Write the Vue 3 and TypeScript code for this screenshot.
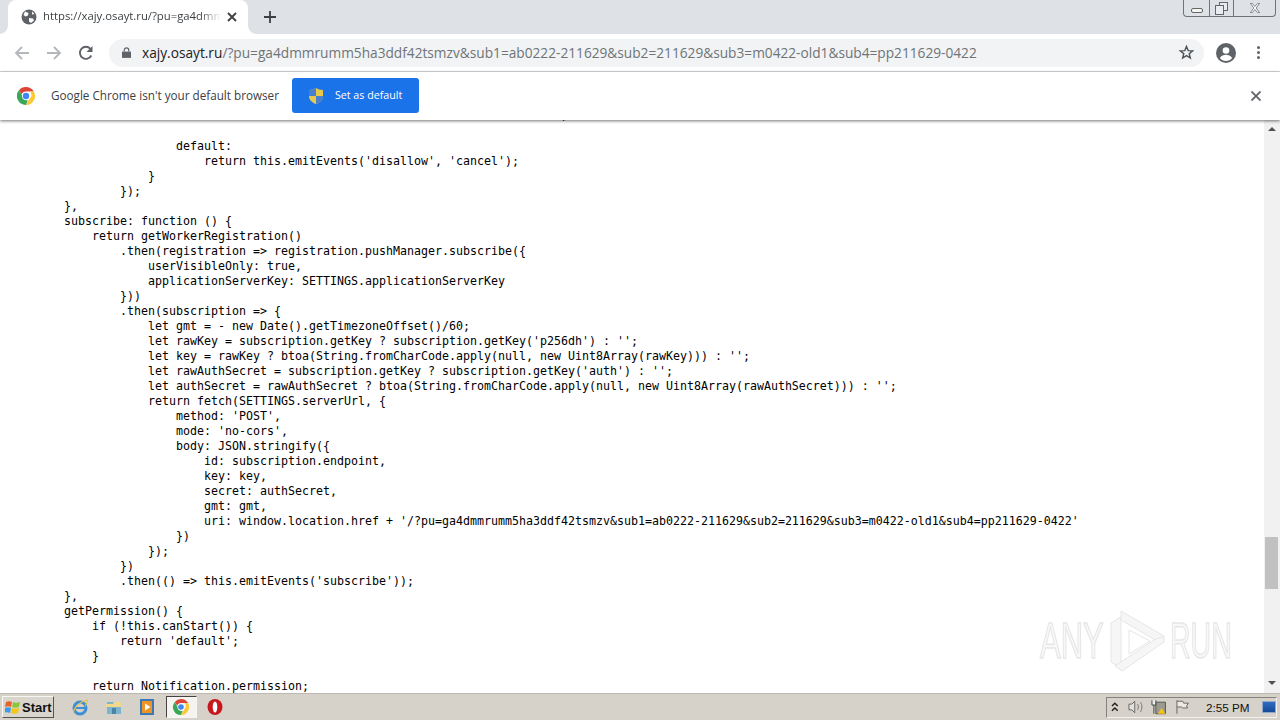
<script setup lang="ts">
const lines: string[] = [
  '',
  '                    default:',
  "                        return this.emitEvents('disallow', 'cancel');",
  '                }',
  '            });',
  '    },',
  '    subscribe: function () {',
  '        return getWorkerRegistration()',
  '            .then(registration => registration.pushManager.subscribe({',
  '                userVisibleOnly: true,',
  '                applicationServerKey: SETTINGS.applicationServerKey',
  '            }))',
  '            .then(subscription => {',
  '                let gmt = - new Date().getTimezoneOffset()/60;',
  "                let rawKey = subscription.getKey ? subscription.getKey('p256dh') : '';",
  "                let key = rawKey ? btoa(String.fromCharCode.apply(null, new Uint8Array(rawKey))) : '';",
  "                let rawAuthSecret = subscription.getKey ? subscription.getKey('auth') : '';",
  "                let authSecret = rawAuthSecret ? btoa(String.fromCharCode.apply(null, new Uint8Array(rawAuthSecret))) : '';",
  '                return fetch(SETTINGS.serverUrl, {',
  "                    method: 'POST',",
  "                    mode: 'no-cors',",
  '                    body: JSON.stringify({',
  '                        id: subscription.endpoint,',
  '                        key: key,',
  '                        secret: authSecret,',
  '                        gmt: gmt,',
  "                        uri: window.location.href + '/?pu=ga4dmmrumm5ha3ddf42tsmzv&sub1=ab0222-211629&sub2=211629&sub3=m0422-old1&sub4=pp211629-0422'",
  '                    })',
  '                });',
  '            })',
  "            .then(() => this.emitEvents('subscribe'));",
  '    },',
  '    getPermission() {',
  '        if (!this.canStart()) {',
  "            return 'default';",
  '        }',
  '',
  '        return Notification.permission;',
]
</script>

<template>
  <div class="screen">
    <header class="tabstrip">
      <div class="tab">
        <svg class="globe" viewBox="0 0 16 16" width="16" height="16">
          <circle cx="8" cy="8" r="7.5" fill="#5f6368" />
          <path d="M4 2.500 7.500 4 7 6.500 4.500 7.500 2.500 6z M8 9l4 .5 1 2-3 2.500-2-1.500z M11 2.500l2.500 2.500-2.500.5z" fill="#fff" />
        </svg>
        <span class="tab-title">https://xajy.osayt.ru/?pu=ga4dmmrumm</span>
        <svg class="tab-close" viewBox="0 0 10 10" width="10" height="10">
          <path d="M1 1l8 8M9 1l-8 8" stroke="#3c4043" stroke-width="1.800" />
        </svg>
      </div>
      <svg class="newtab" viewBox="0 0 12 12" width="12" height="12">
        <path d="M6 0v12M0 6h12" stroke="#3c4043" stroke-width="1.800" />
      </svg>
      <div class="caption">
        <span class="cap-btn cap-min"><i class="min-glyph"></i></span>
        <span class="cap-btn cap-max"><i class="max-back"></i><i class="max-front"></i></span>
        <span class="cap-btn cap-close">
          <svg viewBox="0 0 12 10" width="12" height="10"><path d="M1.500 .5h2L6 3.500 8.500 .5h2L7.200 5l3.300 4.500h-2L6 6.500 3.500 9.500h-2L4.800 5z" fill="#fff" stroke="#6b7075" stroke-width=".8" /></svg>
        </span>
      </div>
    </header>

    <nav class="toolbar">
      <svg class="nav-icon" viewBox="0 0 16 16" width="16" height="16"><path d="M15 8H2M8 2 2 8l6 6" fill="none" stroke="#b4b7bb" stroke-width="1.800" /></svg>
      <svg class="nav-icon" viewBox="0 0 16 16" width="16" height="16"><path d="M1 8h13M8 2l6 6-6 6" fill="none" stroke="#b4b7bb" stroke-width="1.800" /></svg>
      <svg class="nav-icon" viewBox="0 0 16 16" width="16" height="16"><path d="M13.300 10.500A6 6 0 1 1 12.400 3.800" fill="none" stroke="#5f6368" stroke-width="1.900" /><path d="M14.500 1v6h-6z" fill="#5f6368" /></svg>
      <div class="omnibox">
        <svg class="lock" viewBox="0 0 10 12" width="9" height="11"><path d="M0 5h10v7H0z" fill="#5f6368" /><path d="M2.500 5V3.300a2.500 2.500 0 0 1 5 0V5" fill="none" stroke="#5f6368" stroke-width="1.300" /></svg>
        <span class="url"><b>xajy.osayt.ru</b>/?pu=ga4dmmrumm5ha3ddf42tsmzv&amp;sub1=ab0222-211629&amp;sub2=211629&amp;sub3=m0422-old1&amp;sub4=pp211629-0422</span>
        <svg class="star" viewBox="0 0 16 16" width="15" height="15"><path d="M8 1.500 9.800 6l4.700.3-3.600 3 1.200 4.600L8 11.400l-4.100 2.500 1.200-4.600-3.600-3L6.200 6z" fill="none" stroke="#4f5357" stroke-width="1.500" /></svg>
      </div>
      <svg class="avatar" viewBox="0 0 20 20" width="20" height="20">
        <circle cx="10" cy="10" r="10" fill="#5f6368" />
        <circle cx="10" cy="7.500" r="3.300" fill="#fff" />
        <path d="M3.800 15c1.500-2.600 4-3.300 6.200-3.300s4.700.7 6.200 3.300c-1.500 1.900-3.700 3-6.200 3s-4.700-1.100-6.200-3z" fill="#fff" />
      </svg>
      <span class="menu-dots"><i></i><i></i><i></i></span>
    </nav>

    <section class="infobar">
      <svg class="chrome-logo" viewBox="0 0 18 18" width="18" height="18">
        <path d="M9 0a9 9 0 0 1 7.800 4.500H9a4.500 4.500 0 0 0-4.300 3.200L2 3.200A9 9 0 0 1 9 0z" fill="#db4437" />
        <path d="M16.800 4.500A9 9 0 0 1 9 18l3.900-6.700a4.500 4.500 0 0 0 0-6.800z" fill="#fcc934" />
        <path d="M9 18A9 9 0 0 1 2 3.200l3.900 6.700a4.500 4.500 0 0 0 5 3.400z" fill="#3aa757" />
        <circle cx="9" cy="9" r="4" fill="#fff" />
        <circle cx="9" cy="9" r="3.200" fill="#4285f4" />
      </svg>
      <span class="info-text">Google Chrome isn't your default browser</span>
      <button class="default-btn" type="button">
        <svg viewBox="0 0 14 16" width="14" height="16">
          <path d="M7 0c2 1.300 4 2 7 2v6c0 4-3 6.500-7 8-4-1.500-7-4-7-8V2c3 0 5-.7 7-2z" fill="#e8c94a" />
          <path d="M7 0v8H0V2c3 0 5-.7 7-2z" fill="#4a7fd0" />
          <path d="M7 8h7c0 4-3 6.500-7 8z" fill="#4a7fd0" />
        </svg>
        <span class="btn-label">Set as default</span>
      </button>
      <svg class="info-close" viewBox="0 0 10 10" width="10" height="10"><path d="M.5.5l9 9M9.500.5l-9 9" stroke="#5f6368" stroke-width="1.800" /></svg>
    </section>

    <main class="content">
      <div class="page">
        <div class="cut-line">(permission) callback),</div>
        <pre class="code"><template v-for="(line, i) in lines" :key="i">{{ line }}
</template></pre>
      </div>
      <div class="scrollbar">
        <span class="arrow up"></span>
        <div class="track"><div class="thumb"></div></div>
        <span class="arrow down"></span>
      </div>
      <div class="watermark">
        <span class="wm-word wm-any">ANY</span>
        <svg viewBox="0 0 55 62" width="55" height="62">
          <path d="M1 13 11 7V58L1 52z" fill="#f6f6f6" stroke="#e6e6e6" />
          <path d="M11 1 54 26 47 31 11 10z" fill="#f6f6f6" stroke="#e6e6e6" />
          <path d="M54 26V32L12 61 5 56 44 30z" fill="#f6f6f6" stroke="#e6e6e6" />
          <path d="M19 20 40 31 19 44z" fill="#fff" stroke="#e6e6e6" />
        </svg>
        <span class="wm-word wm-run">RUN</span>
      </div>
    </main>

    <footer class="taskbar">
      <button class="start" type="button">
        <svg viewBox="0 0 16 16" width="16" height="16">
          <path d="M1 3c2-1 4-1 6 0l-1 5c-2-1-4-1-6 0z" fill="#e8612c" />
          <path d="M8 3c2 1 4 1 7 0l-1 5c-3 1-5 1-7 0z" fill="#8cc63f" />
          <path d="M0 9c2-1 4-1 6 0l-1 5c-2-1-4-1-6 0z" fill="#3d9ae8" />
          <path d="M7 9c2 1 4 1 7 0l-1 5c-3 1-5 1-7 0z" fill="#f5c518" />
        </svg>
        <span>Start</span>
      </button>
      <div class="quick">
        <svg viewBox="0 0 18 18" width="18" height="18">
          <circle cx="9" cy="10" r="6" fill="none" stroke="#3c8fd6" stroke-width="3" />
          <path d="M5 10h9" stroke="#3c8fd6" stroke-width="2" />
          <path d="M3 15C1 12 8 4 16 2c1 2-1 5-2 6" fill="none" stroke="#e5c14e" stroke-width="1.200" />
        </svg>
        <svg viewBox="0 0 18 18" width="18" height="18">
          <path d="M2 4h14v12H2z" fill="#7fb4cf" />
          <path d="M1 6h7l1-2h7v5H1z" fill="#f0d98c" />
          <path d="M7 10h4v6H7z" fill="#4c83a8" />
        </svg>
        <svg viewBox="0 0 18 18" width="18" height="18">
          <path d="M2 1h14v16H2z" fill="#3c78b4" />
          <path d="M4 3h10v12H4z" fill="#ee9326" />
          <path d="M7 5.500v7l5.500-3.500z" fill="#fff" />
        </svg>
        <span class="active-app">
          <svg viewBox="0 0 18 18" width="18" height="18">
            <path d="M9 1a8 8 0 0 1 7 4H9a4 4 0 0 0-3.800 2.800L2.800 3.900A8 8 0 0 1 9 1z" fill="#db4437" />
            <path d="M16 5a8 8 0 0 1-7 12l3.500-6a4 4 0 0 0 0-6z" fill="#fcc934" />
            <path d="M9 17a8 8 0 0 1-6.200-13.100l3.400 6a4 4 0 0 0 4.400 3z" fill="#3aa757" />
            <circle cx="9" cy="9" r="3.500" fill="#fff" />
            <circle cx="9" cy="9" r="2.800" fill="#4285f4" />
          </svg>
        </span>
        <svg viewBox="0 0 18 18" width="18" height="18">
          <ellipse cx="9" cy="9" rx="7.500" ry="8" fill="#c8161d" />
          <ellipse cx="9" cy="9" rx="2.300" ry="5.500" fill="#fff" />
        </svg>
      </div>
      <div class="tray">
        <svg class="tray-up" viewBox="0 0 8 10" width="8" height="10"><path d="M1 4l3-3 3 3M1 9l3-3 3 3" fill="none" stroke="#222" stroke-width="1.500" /></svg>
        <svg viewBox="0 0 16 16" width="16" height="16"><path d="M1 5h3l3-3v12l-3-3H1z" fill="#e4e1db" stroke="#666" /><path d="M10 5c1 2 1 4 0 6M13 3c2 3 2 7 0 10" fill="none" stroke="#777" /></svg>
        <svg viewBox="0 0 16 16" width="16" height="16"><path d="M5 3h10v12H5z" fill="#9a9a8e" stroke="#555" /><path d="M1 1v5h4V1M3 6v9" fill="#eee" stroke="#444" /><path d="M11 9l4 6H7z" fill="#f4c518" /></svg>
        <svg viewBox="0 0 16 16" width="16" height="16"><path d="M2 1v14M2 2h6l1 2h5l-2 3 1 2H8L7 8H2" fill="#eeeae2" stroke="#666" /></svg>
        <span class="clock">2:55 PM</span>
        <span class="show-desktop"></span>
      </div>
    </footer>
  </div>
</template>

<style>
html, body { margin: 0; padding: 0; overflow: hidden; }
</style>

<style scoped>
.screen {
  width: 1280px;
  height: 720px;
  display: flex;
  flex-direction: column;
  overflow: hidden;
  background: #fff;
  font-family: "Open Sans", "Noto Sans", sans-serif;
}
.tabstrip {
  height: 34px;
  flex: none;
  background: #dee1e6;
  display: flex;
  align-items: flex-end;
  padding-left: 8px;
  position: relative;
}
.tab {
  width: 240px;
  height: 34px;
  box-sizing: border-box;
  background: #fff;
  border-radius: 8px 8px 0 0;
  display: flex;
  align-items: center;
  padding: 0 11px 0 13px;
  gap: 6px;
  position: relative;
}
.tab::before, .tab::after {
  content: "";
  position: absolute;
  bottom: 0;
  width: 8px;
  height: 8px;
}
.tab::before { left: -8px; background: radial-gradient(circle at 0 0, transparent 7.500px, #fff 8px); }
.tab::after { right: -8px; background: radial-gradient(circle at 100% 0, transparent 7.500px, #fff 8px); }
.globe, .tab-close, .newtab { flex: none; }
.tab-title {
  flex: 1;
  min-width: 0;
  overflow: hidden;
  white-space: nowrap;
  font-size: 11.300px;
  line-height: 32px;
  height: 34px;
  color: #3c4043;
  -webkit-mask-image: linear-gradient(to right, #000 88%, transparent);
  mask-image: linear-gradient(to right, #000 88%, transparent);
}
.tab-close { margin-top: -1px; }
.newtab { margin: 0 0 11px 16px; }
.caption {
  position: absolute;
  top: 0;
  right: 4px;
  width: 93px;
  height: 17px;
  box-sizing: border-box;
  border: 1px solid #6f7478;
  border-top: none;
  border-radius: 0 0 4px 4px;
  display: flex;
}
.cap-btn { position: relative; display: flex; align-items: center; justify-content: center; }
.cap-min { width: 25px; border-right: 1px solid #6f7478; }
.cap-max { width: 23px; border-right: 1px solid #6f7478; }
.cap-close { flex: 1; }
.min-glyph { width: 10px; height: 3px; margin-top: 4px; border: 1px solid #666; border-radius: 2px; background: #f4f4f4; }
.max-back, .max-front { position: absolute; box-sizing: border-box; border: 1px solid #666; background: #e9ebee; }
.max-back { width: 9px; height: 9px; left: 9px; top: 2px; }
.max-front { width: 9px; height: 10px; left: 5px; top: 5px; }

.toolbar {
  height: 38px;
  flex: none;
  box-sizing: border-box;
  border-bottom: 1px solid #d8dadc;
  background: #fff;
  display: flex;
  align-items: center;
  padding-left: 14px;
}
.nav-icon { flex: none; margin-right: 16px; }
.omnibox {
  width: 1095px;
  height: 28px;
  margin-left: -1px;
  box-sizing: border-box;
  background: #f1f3f4;
  border-radius: 14px;
  display: flex;
  align-items: center;
  padding: 0 10px 0 13px;
}
.lock { flex: none; margin-right: 11px; }
.url {
  flex: 1;
  min-width: 0;
  white-space: nowrap;
  overflow: hidden;
  font-size: 13.700px;
  color: #6f7478;
}
.url b { font-weight: 400; color: #202124; }
.star { flex: none; }
.avatar { flex: none; margin-left: 12px; }
.menu-dots { flex: none; display: flex; flex-direction: column; gap: 2px; margin-left: 21px; }
.menu-dots i { width: 3px; height: 3px; border-radius: 50%; background: #5f6368; }

.infobar {
  height: 48px;
  flex: none;
  box-sizing: border-box;
  background: #fff;
  display: flex;
  align-items: center;
  padding-left: 17px;
  box-shadow: 0 1px 3px rgba(0, 0, 0, .55);
  position: relative;
  z-index: 2;
}
.chrome-logo { flex: none; margin-right: 16px; }
.info-text { font-size: 11.700px; line-height: 16px; color: #3c4043; white-space: nowrap; margin-bottom: 2px; }
.default-btn {
  width: 127px;
  height: 35px;
  margin: -1px 0 0 13px;
  border: none;
  border-radius: 3px;
  background: #1a73e8;
  color: #fff;
  font: inherit;
  font-size: 10.700px;
  display: flex;
  align-items: center;
  padding: 0 0 0 17px;
  gap: 12px;
}
.btn-label { line-height: 14px; margin-bottom: 2px; }
.info-close { position: absolute; right: 19px; top: 19px; }

.content {
  flex: 1;
  min-height: 0;
  display: flex;
  position: relative;
  overflow: hidden;
}
.page { flex: 1; min-width: 0; overflow: hidden; position: relative; }
.cut-line {
  position: absolute;
  left: 555px;
  top: -13px;
  font: 11.630px/15px "DejaVu Sans Mono", monospace;
  color: #000;
  white-space: pre;
}
.code {
  margin: 4px 0 0;
  padding-left: 36px;
  font: 11.630px/15px "DejaVu Sans Mono", "Liberation Mono", monospace;
  color: #000;
  white-space: pre;
}
.scrollbar {
  width: 16px;
  flex: none;
  background: #f1f1f1;
  display: flex;
  flex-direction: column;
}
.arrow { height: 17px; flex: none; display: flex; align-items: center; justify-content: center; }
.arrow::before { content: ""; border-left: 4px solid transparent; border-right: 4px solid transparent; }
.up::before { border-bottom: 4px solid #505050; }
.down { margin-bottom: 2px; }
.down::before { border-top: 4px solid #505050; }
.track { flex: 1; padding-top: 400px; }
.thumb { height: 52px; margin: 0 2px 0 1px; background: #c1c1c1; }

.watermark {
  position: absolute;
  left: 1040px;
  top: 490px;
  width: 192px;
  display: flex;
  align-items: center;
  justify-content: space-between;
  pointer-events: none;
}
.wm-word {
  display: block;
  width: 62px;
  font: 400 50px/62px "Liberation Sans", sans-serif;
  color: #f8f8f8;
  -webkit-text-stroke: 1.500px #e6e6e6;
  transform-origin: left center;
  white-space: nowrap;
}
.wm-any { transform: scaleX(.62); margin-right: 8px; }
.wm-run { transform: scaleX(.57); margin-left: 5px; }

.taskbar {
  height: 27px;
  flex: none;
  box-sizing: border-box;
  background: #d6d2ca;
  border-top: 1px solid #bdb9b1;
  display: flex;
  align-items: center;
}
.start {
  width: 52px;
  height: 22px;
  margin-left: 2px;
  box-sizing: border-box;
  padding: 0 0 0 2px;
  display: flex;
  align-items: center;
  gap: 1px;
  background: #d9d5cd;
  border: 1px solid;
  border-color: #f7f6f3 #55534e #55534e #f7f6f3;
  font: 700 13px "Liberation Sans", sans-serif;
  color: #111;
}
.quick {
  margin-left: 9px;
  display: grid;
  grid-template-columns: 34px 33px 34px 34px 33px;
  justify-items: center;
  align-items: center;
}
.active-app {
  width: 31px;
  height: 22px;
  box-sizing: border-box;
  display: flex;
  align-items: center;
  justify-content: center;
  background: #f6f4f0;
  border: 1px solid;
  border-color: #45433f #f7f6f3 #f7f6f3 #45433f;
}
.tray {
  margin-left: auto;
  margin-right: 3px;
  width: 171px;
  height: 21px;
  box-sizing: border-box;
  border: 1px solid;
  border-color: #85827b #f4f2ee #f4f2ee #85827b;
  display: flex;
  align-items: center;
  padding-left: 4px;
  gap: 8px;
}
.tray-up { margin-right: 1px; }
.clock { font: 11.700px "Liberation Sans", sans-serif; color: #111; margin-left: 8px; white-space: nowrap; }
.show-desktop { width: 12px; height: 10px; margin-left: 5px; background: linear-gradient(#2f6cc0, #174a96); border: 1px solid #8fa9cc; }
</style>
